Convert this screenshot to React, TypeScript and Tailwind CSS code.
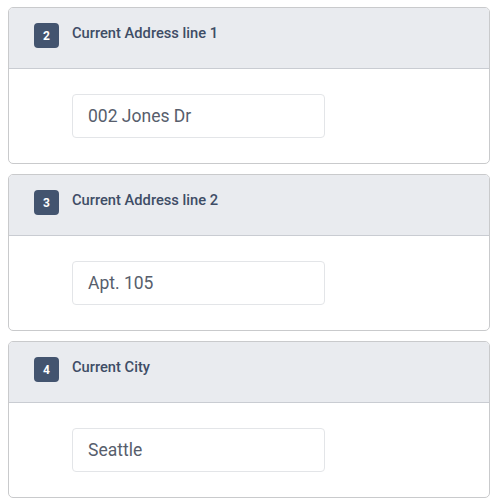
import React from "react";

const items = [
  { n: 2, title: "Current Address line 1", value: "002 Jones Dr" },
  { n: 3, title: "Current Address line 2", value: "Apt. 105" },
  { n: 4, title: "Current City", value: "Seattle" },
];

export default function App() {
  return (
    <div
      className="w-[498px] h-[503px] bg-white px-2 pt-[7px] flex flex-col gap-[10px]"
      style={{ fontFamily: "Roboto, 'Liberation Sans', sans-serif" }}
    >
      {items.map((it) => (
        <div
          key={it.n}
          className="border border-[#c9cacc] rounded-[5px] overflow-hidden flex flex-col"
        >
          <div className="h-[61px] bg-[#e9ebef] border-b border-[#c9ccd2] flex items-start pl-[25px] pt-[15px] gap-[13px]">
            <div className="w-[25px] h-[25px] rounded-[4px] bg-[#43546f] text-white text-[12px] font-bold flex items-center justify-center">
              {it.n}
            </div>
            <div className="text-[14.7px] leading-[20px] font-medium text-[#3e4d66]">
              {it.title}
            </div>
          </div>
          <div className="h-[94px] flex items-center pl-[63px]">
            <div className="w-[253px] h-[44px] border border-[#e3e5e8] rounded-[4px] flex items-center pl-[15px] text-[17.5px] text-[#575e6c]">
              {it.value}
            </div>
          </div>
        </div>
      ))}
    </div>
  );
}
